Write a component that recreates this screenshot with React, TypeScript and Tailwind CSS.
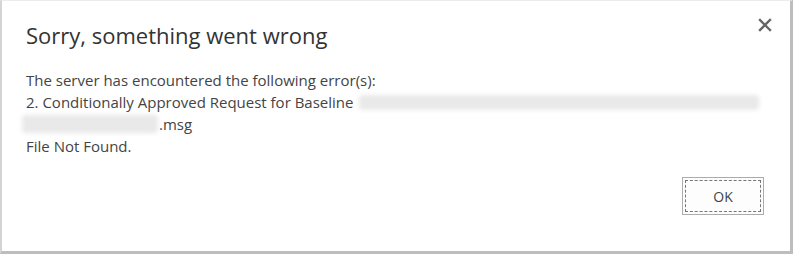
import React from "react";

const Blur: React.FC<{ className: string }> = ({ className }) => (
  <span className={`inline-block align-middle rounded-sm bg-[#e9e9e9] blur-[2px] ${className}`} />
);

export default function App() {
  return (
    <div className="w-[793px] h-[254px] bg-white font-['Segoe_UI','Open_Sans',sans-serif] text-[#444]">
      <div className="relative h-full border-l-2 border-t border-l-[#d4d4d4] border-t-[#ececec] border-r-[3px] border-r-[#bdbdbd] border-b-[3px] border-b-[#bdbdbd] pl-[24px] pr-[28px] pt-[18px] flex flex-col">
        <button className="absolute right-[17px] top-[16px] w-[16px] h-[16px] text-[#666]" type="button">
          <svg viewBox="0 0 16 16" className="w-full h-full">
            <path d="M3 3 L13 13 M13 3 L3 13" stroke="currentColor" strokeWidth="2.4" strokeLinecap="square" />
          </svg>
        </button>
        <h1 className="text-[22px] leading-[32px] text-[#333] font-normal">Sorry, something went wrong</h1>
        <div className="mt-[18px] text-[15px] leading-[22px]">
          <div>The server has encountered the following error(s):</div>
          <div className="flex items-center">
            <span>2. Conditionally Approved Request for Baseline</span>
            <Blur className="ml-[6px] w-[400px] h-[15px]" />
          </div>
          <div className="flex items-center -ml-[4px]">
            <Blur className="w-[136px] h-[18px]" />
            <span className="ml-[1px]">.msg</span>
          </div>
          <div>File Not Found.</div>
        </div>
        <div className="flex justify-end mt-[20px] -mr-[2px]">
          <button
            type="button"
            className="w-[82px] h-[38px] border border-[#ababab] bg-[#fdfdfd] p-[2px] text-[14px] text-[#444]"
          >
            <span className="flex items-center justify-center w-full h-full border border-dashed border-[#777]">OK</span>
          </button>
        </div>
      </div>
    </div>
  );
}
